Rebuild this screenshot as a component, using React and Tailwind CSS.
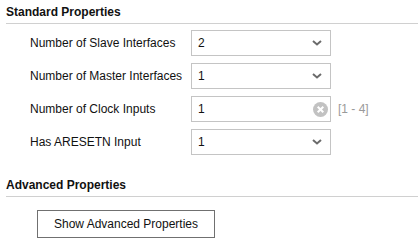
import React from 'react';

const Chevron = () => (
    <svg width="10" height="6" viewBox="0 0 10 6" className="shrink-0">
        <path d="M1 1 L5 4.5 L9 1" fill="none" stroke="#6b6b6b" strokeWidth="2" />
    </svg>
);

const ClearIcon = () => (
    <svg width="15" height="15" viewBox="0 0 15 15" className="shrink-0">
        <circle cx="7.5" cy="7.5" r="7.5" fill="#c2c2c2" />
        <path d="M4.7 4.7 L10.3 10.3 M10.3 4.7 L4.7 10.3" stroke="#fff" strokeWidth="2" />
    </svg>
);

const rows = [
    { label: 'Number of Slave Interfaces', value: '2', kind: 'select' },
    { label: 'Number of Master Interfaces', value: '1', kind: 'select' },
    { label: 'Number of Clock Inputs', value: '1', kind: 'input', hint: '[1 - 4]' },
    { label: 'Has ARESETN Input', value: '1', kind: 'select' },
];

const App = () => {
    return (
        <div
            className="w-[418px] h-[245px] bg-white text-[12px] leading-[14px] text-[#111] overflow-hidden"
            style={{ fontFamily: '"Liberation Sans", Arial, sans-serif' }}
        >
            <div className="ml-[6px] pt-[5px] pb-[4px] border-b border-[#d0d0d0] font-bold">
                Standard Properties
            </div>

            <div className="mt-[6px] flex flex-col gap-[7px]">
                {rows.map((row) => (
                    <div key={row.label} className="flex items-center h-[26px]">
                        <div className="w-[191px] pl-[30px]">{row.label}</div>
                        <div className="w-[140px] h-[26px] border border-[#c4c4c4] flex items-center justify-between pl-[6px]">
                            <span>{row.value}</span>
                            {row.kind === 'select' ? (
                                <span className="pr-[8px] flex"><Chevron /></span>
                            ) : (
                                <span className="pr-[2px] flex"><ClearIcon /></span>
                            )}
                        </div>
                        {row.hint && <span className="ml-[7px] text-[#9a9a9a]">{row.hint}</span>}
                    </div>
                ))}
            </div>

            <div className="ml-[6px] mt-[18px] pt-[5px] pb-[4px] border-b border-[#d0d0d0] font-bold">
                Advanced Properties
            </div>

            <div className="mt-[13px] pl-[37px]">
                <button className="w-[178px] h-[28px] border border-[#707070] bg-white text-[#111] flex items-center justify-center">
                    Show Advanced Properties
                </button>
            </div>
        </div>
    );
};

export default App;
